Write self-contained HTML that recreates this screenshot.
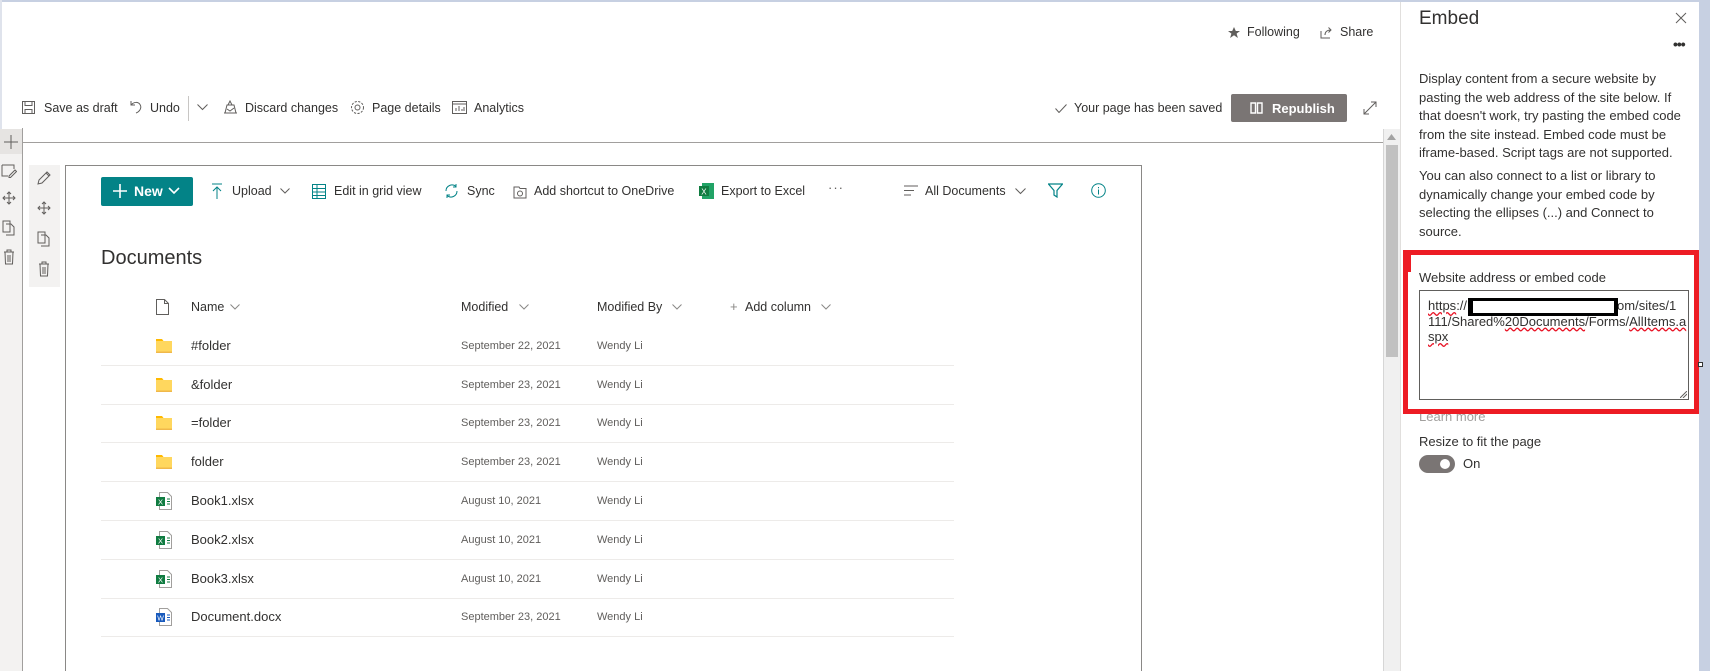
<!DOCTYPE html>
<html style="width:1710px;height:671px;overflow:hidden"><head><meta charset="utf-8">
<style>
*{margin:0;padding:0;box-sizing:border-box}
body{width:1710px;height:671px;overflow:hidden;background:#fff;font-family:"Liberation Sans",Arial,sans-serif;color:#323130;position:relative}
.a{position:absolute;white-space:nowrap}
.t13{font-size:13px}
.t125{font-size:12.5px}
.ic{position:absolute}
.line{position:absolute;background:#edebe9}
.row{position:absolute;left:101px;width:853px;height:1px;background:#edebe9}
.nm{position:absolute;left:191px;font-size:13px;color:#323130}
.dt{position:absolute;left:461px;font-size:11px;color:#605e5c}
.by{position:absolute;left:597px;font-size:11px;color:#605e5c}
.p{position:absolute;left:1419px;font-size:13px;line-height:18.6px;color:#323130;white-space:nowrap}
</style></head><body>
<div class="a" style="left:0;top:0;width:1710px;height:2px;background:#c7d0e2"></div>
<div class="a" style="left:0;top:0;width:2px;height:671px;background:#dfe3ec"></div>
<div class="a" style="left:1699px;top:0;width:11px;height:671px;background:#c7d0e2"></div>

<svg class="ic" style="left:1227px;top:26px" width="14" height="14" viewBox="0 0 14 14"><path d="M7 1l1.8 4H13l-3.4 2.6 1.3 4.4L7 9.3 3.1 12l1.3-4.4L1 5h4.2z" fill="#605e5c"/></svg>
<div class="a t125" style="left:1247px;top:25px">Following</div>
<svg class="ic" style="left:1319px;top:26px" width="14" height="14" viewBox="0 0 14 14" fill="none" stroke="#605e5c"><path d="M2 5v7h9M6 9c0-3 2-5 6-5M9.5 1.5 12 4 9.5 6.5"/></svg>
<div class="a t125" style="left:1340px;top:25px">Share</div>

<div class="line" style="left:0;top:87px;width:1400px"></div>
<svg class="ic" style="left:22px;top:101px" width="13" height="13" viewBox="0 0 13 13" fill="none" stroke="#605e5c"><rect x=".5" y=".5" width="12" height="12"/><path d="M3 .5v4h7v-4M3 12.5v-4h7v4"/></svg>
<div class="a t125" style="left:44px;top:101px">Save as draft</div>
<svg class="ic" style="left:130px;top:100px" width="12" height="14" viewBox="0 0 12 14" fill="none" stroke="#605e5c"><path d="M1 1v4h4M1.5 4.5C4 2 8 1.5 10 4.5s0 7-4 8.5"/></svg>
<div class="a t125" style="left:150px;top:101px">Undo</div>
<div class="a" style="left:188px;top:96px;width:1px;height:25px;background:#c8c6c4"></div>
<svg class="ic" style="left:197px;top:104px" width="11" height="7" viewBox="0 0 11 7" fill="none" stroke="#605e5c"><path d="M.5.5l5 5 5-5"/></svg>
<svg class="ic" style="left:223px;top:100px" width="15" height="14" viewBox="0 0 15 14" fill="none" stroke="#605e5c"><path d="M1 13h13M2 13 4 5h7l2 8M5 5l2-4 2 4M4 9l3 2 4-3"/></svg>
<div class="a t125" style="left:245px;top:101px">Discard changes</div>
<svg class="ic" style="left:350px;top:100px" width="15" height="15" viewBox="0 0 15 15" fill="none" stroke="#605e5c"><circle cx="7.5" cy="7.5" r="2.5"/><circle cx="7.5" cy="7.5" r="6" stroke-dasharray="2.2 1.4"/></svg>
<div class="a t125" style="left:372px;top:101px">Page details</div>
<svg class="ic" style="left:452px;top:101px" width="15" height="13" viewBox="0 0 15 13" fill="none" stroke="#605e5c"><rect x=".5" y=".5" width="14" height="12"/><path d="M.5 3h14M4 10V7M7 10V5M10 10V8M12 10V6"/></svg>
<div class="a t125" style="left:474px;top:101px">Analytics</div>

<svg class="ic" style="left:1055px;top:104px" width="12" height="9" viewBox="0 0 12 9" fill="none" stroke="#605e5c"><path d="M.5 4.5l3.5 4 7.5-8"/></svg>
<div class="a t125" style="left:1074px;top:101px">Your page has been saved</div>
<div class="a" style="left:1231px;top:94px;width:116px;height:28px;background:#7a7574;border-radius:2px"></div>
<svg class="ic" style="left:1250px;top:102px" width="13" height="12" viewBox="0 0 13 12" fill="none" stroke="#fff" stroke-width="1.4"><path d="M1 1h4.5v10H1zM7.5 1H12v10H7.5z"/></svg>
<div class="a t13" style="left:1272px;top:101px;color:#fff;font-weight:bold">Republish</div>
<svg class="ic" style="left:1363px;top:101px" width="14" height="14" viewBox="0 0 14 14" fill="none" stroke="#605e5c"><path d="M1 13 13 1M8 1h5v5M1 8v5h5"/></svg>

<div class="line" style="left:0;top:128px;width:1400px"></div>

<div class="a" style="left:0;top:129px;width:22px;height:542px;background:#f3f2f1"></div>
<div class="a" style="left:0;top:129px;width:22px;height:25px;background:#e6e4e2"></div>
<svg class="ic" style="left:3px;top:134px" width="16" height="16" viewBox="0 0 16 16" fill="none" stroke="#605e5c"><path d="M8 1v14M1 8h14"/></svg>
<svg class="ic" style="left:1px;top:164px" width="16" height="14" viewBox="0 0 16 14" fill="none" stroke="#605e5c"><path d="M1 1h12v4M1 1v11h6M8 12l6-6 1.5 1.5-6 6H8z"/></svg>
<svg class="ic" style="left:2px;top:191px" width="14" height="14" viewBox="0 0 14 14" fill="none" stroke="#605e5c"><path d="M7 1v12M1 7h12M5 3l2-2 2 2M5 11l2 2 2-2M3 5 1 7l2 2M11 5l2 2-2 2"/></svg>
<svg class="ic" style="left:2px;top:220px" width="14" height="16" viewBox="0 0 14 16" fill="none" stroke="#605e5c"><path d="M1 1h7v11H1zM4 4h5l3 3v8H4"/></svg>
<svg class="ic" style="left:3px;top:249px" width="12" height="16" viewBox="0 0 12 16" fill="none" stroke="#605e5c"><path d="M1 3h10M4 3V1h4v2M2 3l.5 12h7L10 3M5 6v7M7 6v7"/></svg>

<div class="a" style="left:22px;top:128px;width:1px;height:543px;background:#a19f9d"></div>
<div class="a" style="left:22px;top:142px;width:1361px;height:1px;background:#a19f9d"></div>
<div class="a" style="left:1383px;top:129px;width:17px;height:542px;background:#f0f0f0;border-left:1px solid #d6d6d6"></div>
<div class="a" style="left:1386px;top:145px;width:12px;height:212px;background:#c1c1c1"></div>
<svg class="ic" style="left:1387px;top:134px" width="9" height="6" viewBox="0 0 9 6"><path d="M0 6 4.5 0 9 6z" fill="#a3a3a3"/></svg>
<div class="a" style="left:1400px;top:2px;width:1px;height:669px;background:#e1dfdd"></div>

<div class="a" style="left:29px;top:165px;width:31px;height:122px;background:#f3f2f1"></div>
<svg class="ic" style="left:36px;top:170px" width="16" height="16" viewBox="0 0 16 16" fill="none" stroke="#605e5c"><path d="M2 14l1-4 8-8 3 3-8 8zM10 3l3 3"/></svg>
<svg class="ic" style="left:37px;top:201px" width="14" height="14" viewBox="0 0 14 14" fill="none" stroke="#605e5c"><path d="M7 1v12M1 7h12M5 3l2-2 2 2M5 11l2 2 2-2M3 5 1 7l2 2M11 5l2 2-2 2"/></svg>
<svg class="ic" style="left:37px;top:231px" width="14" height="16" viewBox="0 0 14 16" fill="none" stroke="#605e5c"><path d="M1 1h7v11H1zM4 4h5l3 3v8H4"/></svg>
<svg class="ic" style="left:38px;top:261px" width="12" height="16" viewBox="0 0 12 16" fill="none" stroke="#605e5c"><path d="M1 3h10M4 3V1h4v2M2 3l.5 12h7L10 3M5 6v7M7 6v7"/></svg>

<div class="a" style="left:65px;top:165px;width:1077px;height:520px;border:1px solid #8a8886;border-bottom:none"></div>

<div class="a" style="left:101px;top:177px;width:92px;height:29px;background:#038387;border-radius:2px"></div>
<svg class="ic" style="left:113px;top:184px" width="14" height="14" viewBox="0 0 14 14" stroke="#fff" stroke-width="1.6"><path d="M7 0v14M0 7h14"/></svg>
<div class="a" style="left:134px;top:183px;font-size:14px;font-weight:bold;color:#fff">New</div>
<svg class="ic" style="left:168px;top:187px" width="12" height="8" viewBox="0 0 12 8" fill="none" stroke="#fff" stroke-width="1.6"><path d="M1 1l5 5 5-5"/></svg>

<svg class="ic" style="left:211px;top:183px" width="12" height="16" viewBox="0 0 12 16" fill="none" stroke="#038387"><path d="M1 1h10M6 4v12M2 8l4-4 4 4"/></svg>
<div class="a t125" style="left:232px;top:184px">Upload</div>
<svg class="ic" style="left:280px;top:188px" width="10" height="6" viewBox="0 0 10 6" fill="none" stroke="#605e5c"><path d="M.5.5l4.5 4.5 4.5-4.5"/></svg>
<svg class="ic" style="left:312px;top:184px" width="14" height="15" viewBox="0 0 14 15" fill="none" stroke="#038387"><rect x=".5" y=".5" width="13" height="14"/><path d="M.5 4.5h13M.5 8h13M.5 11.5h13M5 .5v14"/></svg>
<div class="a t125" style="left:334px;top:184px">Edit in grid view</div>
<svg class="ic" style="left:444px;top:183px" width="15" height="16" viewBox="0 0 15 16" fill="none" stroke="#038387"><path d="M2 8a6 6 0 0 1 10-4.5M13 8a6 6 0 0 1-10 4.5M12 1v3h-3M3 15v-3h3"/></svg>
<div class="a t125" style="left:467px;top:184px">Sync</div>
<svg class="ic" style="left:513px;top:184px" width="14" height="15" viewBox="0 0 14 15" fill="none" stroke="#605e5c"><path d="M1 3h5l1 1.5h6V14H1z"/><circle cx="7" cy="9.5" r="2.5"/></svg>
<div class="a t125" style="left:534px;top:184px">Add shortcut to OneDrive</div>
<svg class="ic" style="left:699px;top:183px" width="15" height="16" viewBox="0 0 15 16"><rect x="3" y="0" width="12" height="16" fill="#21a366"/><rect x="0" y="3" width="10" height="10" fill="#107c41"/><text x="2.3" y="11.5" font-size="8" fill="#fff" font-family="Liberation Sans">X</text></svg>
<div class="a t125" style="left:721px;top:184px">Export to Excel</div>
<div class="a t13" style="left:828px;top:180px;color:#605e5c;letter-spacing:1px">···</div>
<svg class="ic" style="left:904px;top:185px" width="14" height="11" viewBox="0 0 14 11" fill="none" stroke="#605e5c"><path d="M0 1h14M0 5.5h10M0 10h7"/></svg>
<div class="a t125" style="left:925px;top:184px">All Documents</div>
<svg class="ic" style="left:1015px;top:188px" width="11" height="7" viewBox="0 0 11 7" fill="none" stroke="#605e5c"><path d="M.5.5l5 5 5-5"/></svg>
<svg class="ic" style="left:1048px;top:183px" width="15" height="15" viewBox="0 0 15 15" fill="none" stroke="#038387" stroke-width="1.2"><path d="M.5 1h14L9 7.5V14l-3-2V7.5z"/></svg>
<svg class="ic" style="left:1091px;top:183px" width="15" height="15" viewBox="0 0 15 15" fill="none" stroke="#038387"><circle cx="7.5" cy="7.5" r="6.8"/><path d="M7.5 6.5v5M7.5 4v1.2"/></svg>
<div class="line" style="left:72px;top:212px;width:1062px"></div>

<div class="a" style="left:101px;top:247px;font-size:20px;color:#323130">Documents</div>

<svg class="ic" style="left:156px;top:299px" width="13" height="16" viewBox="0 0 13 16" fill="none" stroke="#605e5c"><path d="M.5.5h8l4 4v11H.5zM8.5.5v4h4"/></svg>
<div class="a t125" style="left:191px;top:300px">Name</div>
<svg class="ic" style="left:230px;top:304px" width="10" height="6" viewBox="0 0 10 6" fill="none" stroke="#8a8886"><path d="M.5.5l4.5 4.5 4.5-4.5"/></svg>
<div class="a t125" style="left:461px;top:300px">Modified</div>
<svg class="ic" style="left:519px;top:304px" width="10" height="6" viewBox="0 0 10 6" fill="none" stroke="#8a8886"><path d="M.5.5l4.5 4.5 4.5-4.5"/></svg>
<div class="a t125" style="left:597px;top:300px">Modified By</div>
<svg class="ic" style="left:672px;top:304px" width="10" height="6" viewBox="0 0 10 6" fill="none" stroke="#8a8886"><path d="M.5.5l4.5 4.5 4.5-4.5"/></svg>
<div class="a t13" style="left:730px;top:299px;color:#8a8886">+</div>
<div class="a t125" style="left:745px;top:300px">Add column</div>
<svg class="ic" style="left:821px;top:304px" width="10" height="6" viewBox="0 0 10 6" fill="none" stroke="#8a8886"><path d="M.5.5l4.5 4.5 4.5-4.5"/></svg>
<div class="line" style="left:101px;top:325px;width:1004px"></div>

<div class="row" style="top:365px"></div><div class="row" style="top:404px"></div><div class="row" style="top:442px"></div><div class="row" style="top:481px"></div><div class="row" style="top:520px"></div><div class="row" style="top:559px"></div><div class="row" style="top:598px"></div><div class="row" style="top:636px"></div>

<svg class="ic" style="left:156px;top:339px" width="16" height="14" viewBox="0 0 16 14"><path d="M0 0h6l1.5 2H16v12H0z" fill="#ffb900"/><rect y="2" width="16" height="12" fill="#ffd75e"/><rect y="12.5" width="16" height="1.5" fill="#f0b84a"/></svg>
<div class="nm" style="top:338px">#folder</div><div class="dt" style="top:340px">September 22, 2021</div><div class="by" style="top:340px">Wendy Li</div>
<svg class="ic" style="left:156px;top:378px" width="16" height="14" viewBox="0 0 16 14"><path d="M0 0h6l1.5 2H16v12H0z" fill="#ffb900"/><rect y="2" width="16" height="12" fill="#ffd75e"/><rect y="12.5" width="16" height="1.5" fill="#f0b84a"/></svg>
<div class="nm" style="top:377px">&amp;folder</div><div class="dt" style="top:379px">September 23, 2021</div><div class="by" style="top:379px">Wendy Li</div>
<svg class="ic" style="left:156px;top:416px" width="16" height="14" viewBox="0 0 16 14"><path d="M0 0h6l1.5 2H16v12H0z" fill="#ffb900"/><rect y="2" width="16" height="12" fill="#ffd75e"/><rect y="12.5" width="16" height="1.5" fill="#f0b84a"/></svg>
<div class="nm" style="top:415px">=folder</div><div class="dt" style="top:417px">September 23, 2021</div><div class="by" style="top:417px">Wendy Li</div>
<svg class="ic" style="left:156px;top:455px" width="16" height="14" viewBox="0 0 16 14"><path d="M0 0h6l1.5 2H16v12H0z" fill="#ffb900"/><rect y="2" width="16" height="12" fill="#ffd75e"/><rect y="12.5" width="16" height="1.5" fill="#f0b84a"/></svg>
<div class="nm" style="top:454px">folder</div><div class="dt" style="top:456px">September 23, 2021</div><div class="by" style="top:456px">Wendy Li</div>

<svg class="ic" style="left:156px;top:492px" width="16" height="18" viewBox="0 0 16 18"><path d="M3.5.5h8l4 4v13h-12z" fill="#fff" stroke="#a19f9d"/><rect x="0" y="5" width="9" height="9" fill="#107c41"/><text x="2" y="12.5" font-size="7.5" fill="#fff" font-family="Liberation Sans">X</text><path d="M11 7h3M11 9.5h3M11 12h3" stroke="#107c41"/></svg>
<div class="nm" style="top:493px">Book1.xlsx</div><div class="dt" style="top:495px">August 10, 2021</div><div class="by" style="top:495px">Wendy Li</div>
<svg class="ic" style="left:156px;top:531px" width="16" height="18" viewBox="0 0 16 18"><path d="M3.5.5h8l4 4v13h-12z" fill="#fff" stroke="#a19f9d"/><rect x="0" y="5" width="9" height="9" fill="#107c41"/><text x="2" y="12.5" font-size="7.5" fill="#fff" font-family="Liberation Sans">X</text><path d="M11 7h3M11 9.5h3M11 12h3" stroke="#107c41"/></svg>
<div class="nm" style="top:532px">Book2.xlsx</div><div class="dt" style="top:534px">August 10, 2021</div><div class="by" style="top:534px">Wendy Li</div>
<svg class="ic" style="left:156px;top:570px" width="16" height="18" viewBox="0 0 16 18"><path d="M3.5.5h8l4 4v13h-12z" fill="#fff" stroke="#a19f9d"/><rect x="0" y="5" width="9" height="9" fill="#107c41"/><text x="2" y="12.5" font-size="7.5" fill="#fff" font-family="Liberation Sans">X</text><path d="M11 7h3M11 9.5h3M11 12h3" stroke="#107c41"/></svg>
<div class="nm" style="top:571px">Book3.xlsx</div><div class="dt" style="top:573px">August 10, 2021</div><div class="by" style="top:573px">Wendy Li</div>
<svg class="ic" style="left:156px;top:608px" width="16" height="18" viewBox="0 0 16 18"><path d="M3.5.5h8l4 4v13h-12z" fill="#fff" stroke="#a19f9d"/><rect x="0" y="5" width="9" height="9" fill="#185abd"/><text x="1.2" y="12.5" font-size="7" fill="#fff" font-family="Liberation Sans">W</text><path d="M11 7h3M11 9.5h3M11 12h3" stroke="#185abd"/></svg>
<div class="nm" style="top:609px">Document.docx</div><div class="dt" style="top:611px">September 23, 2021</div><div class="by" style="top:611px">Wendy Li</div>

<div class="a" style="left:1419px;top:8px;font-size:19px;color:#323130">Embed</div>
<svg class="ic" style="left:1675px;top:12px" width="12" height="12" viewBox="0 0 12 12" stroke="#605e5c"><path d="M1 1l10 10M11 1 1 11"/></svg>
<div class="a" style="left:1673px;top:36px;font-size:14px;font-weight:bold;color:#323130;letter-spacing:-1px">•••</div>
<div class="p" style="top:70px">Display content from a secure website by<br>pasting the web address of the site below. If<br>that doesn't work, try pasting the embed code<br>from the site instead. Embed code must be<br>iframe-based. Script tags are not supported.</div>
<div class="p" style="top:167px">You can also connect to a list or library to<br>dynamically change your embed code by<br>selecting the ellipses (...) and Connect to<br>source.</div>

<div class="p" style="top:269px">Website address or embed code</div>
<div class="a" style="left:1419px;top:290px;width:270px;height:110px;border:1px solid #605e5c"></div>
<svg class="ic" style="left:1680px;top:391px" width="7" height="7" viewBox="0 0 7 7" stroke="#605e5c"><path d="M0 7 7 0M3 7l4-4"/></svg>
<div class="a" style="left:1428px;top:298px;font-size:13px;line-height:15.5px;color:#323130">
<span style="text-decoration:underline wavy #e81123">https</span>://<span style="display:inline-block;width:150px"></span>om/sites/1<br>111/Shared%<span style="text-decoration:underline wavy #e81123">20Documents</span>/Forms/<span style="text-decoration:underline wavy #e81123">AllItems.a</span><br><span style="text-decoration:underline wavy #e81123">spx</span></div>
<div class="a" style="left:1468px;top:298px;width:150px;height:18px;border:4px solid #000;border-width:3px 4px 3px 5px;background:#fff"></div>

<div class="p" style="top:408px;color:#a19f9d">Learn more</div>
<div class="a" style="left:1403px;top:250px;width:296px;height:164px;border:5px solid #ed1c24"></div>
<div class="a" style="left:1403px;top:250px;width:8px;height:22px;background:#ed1c24"></div>
<div class="a" style="left:1698px;top:362px;width:5px;height:5px;border:1px solid #333;background:#fff"></div>

<div class="p" style="top:433px">Resize to fit the page</div>
<div class="a" style="left:1419px;top:455px;width:36px;height:18px;border-radius:9px;background:#7a7574"></div>
<div class="a" style="left:1440px;top:459px;width:10px;height:10px;border-radius:5px;background:#fff"></div>
<div class="p" style="left:1463px;top:455px">On</div>
</body></html>
